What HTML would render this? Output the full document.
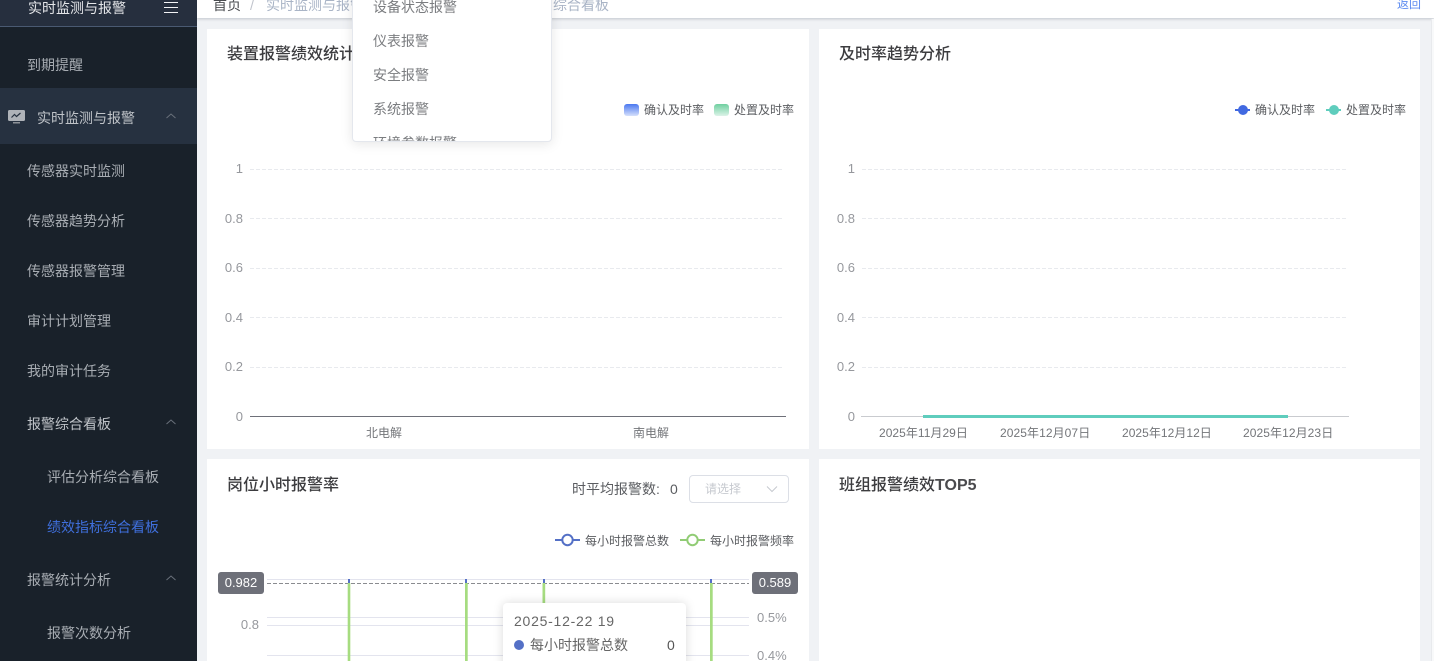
<!DOCTYPE html>
<html lang="zh">
<head>
<meta charset="utf-8">
<style>
*{box-sizing:border-box;margin:0;padding:0}
html,body{width:1434px;height:661px;overflow:hidden;background:#f0f2f5;font-family:"Liberation Sans","Noto Sans CJK SC",sans-serif;color:#606266}
#root{position:absolute;left:0;top:0;width:1434px;height:661px;overflow:hidden;background:#f0f2f5}
.a{position:absolute;white-space:nowrap}
#side{position:absolute;left:0;top:0;width:197px;height:661px;background:#19212a;overflow:hidden}
.m{position:absolute;white-space:nowrap;font-size:14px;line-height:20px;color:#bfc3c8}
.m2{color:#a8adb3}
.card{position:absolute;background:#fff}
.t{position:absolute;font-size:16px;line-height:24px;font-weight:500;color:#3c3c3f;white-space:nowrap}
.y{position:absolute;font-size:13px;line-height:14px;color:#96989d;text-align:right;white-space:nowrap}
.g{position:absolute;height:1px;background:repeating-linear-gradient(90deg,#e8eaee 0 4px,transparent 4px 6px)}
.x{position:absolute;font-size:12px;line-height:14px;color:#737579;white-space:nowrap;text-align:center}
.l{position:absolute;font-size:12px;line-height:14px;color:#5a5c60;white-space:nowrap}
.s{position:absolute;height:1px;background:#e3e4ee}
.cap{position:absolute;width:2px;height:4px;top:579px;background:#5470c6}
.badge{position:absolute;background:#6e7079;color:#fff;font-size:13px;line-height:22px;height:22px;border-radius:3px;text-align:center;top:572px}
.dd{position:absolute;font-size:14px;line-height:20px;color:#7b7d80;white-space:nowrap}
</style>
</head>
<body>
<div id="root">
<!-- topbar -->
<div class="a" style="left:197px;top:0;width:1237px;height:18px;background:#fff;box-shadow:0 1px 3px rgba(0,21,41,.2)"></div>
<div class="a" style="left:213px;top:-5px;font-size:14px;line-height:20px;color:#4a4c50">首页</div>
<div class="a" style="left:250px;top:-5px;font-size:14px;line-height:20px;color:#c0c4cc">/</div>
<div class="a" style="left:266px;top:-5px;font-size:14px;line-height:20px;color:#a9b4c6">实时监测与报警</div>
<div class="a" style="left:553px;top:-5px;font-size:14px;line-height:20px;color:#a9b4c6">综合看板</div>
<div class="a" style="left:1397px;top:-4px;font-size:12px;line-height:16px;color:#5d8bf0">返回</div>
<div class="a" style="left:1431px;top:19px;width:3px;height:642px;background:#f8f9fa;border-left:1px solid #e8eaed"></div>

<!-- card 1 -->
<div class="card" style="left:207px;top:29px;width:602px;height:420px"></div>
<div class="t" style="left:227px;top:43px">装置报警绩效统计</div>
<div class="a" style="left:624px;top:104px;width:15px;height:12px;border-radius:3px;background:linear-gradient(#4a78f0,#d6e0fb)"></div>
<div class="l" style="left:644px;top:103px">确认及时率</div>
<div class="a" style="left:714px;top:104px;width:15px;height:12px;border-radius:3px;background:linear-gradient(#6fd0a0,#dcf3e8)"></div>
<div class="l" style="left:734px;top:103px">处置及时率</div>
<div class="y" style="left:213px;width:30px;top:162px">1</div>
<div class="y" style="left:213px;width:30px;top:212px">0.8</div>
<div class="y" style="left:213px;width:30px;top:261px">0.6</div>
<div class="y" style="left:213px;width:30px;top:311px">0.4</div>
<div class="y" style="left:213px;width:30px;top:360px">0.2</div>
<div class="y" style="left:213px;width:30px;top:410px">0</div>
<div class="g" style="left:250px;width:533px;top:169px"></div>
<div class="g" style="left:250px;width:533px;top:218px"></div>
<div class="g" style="left:250px;width:533px;top:268px"></div>
<div class="g" style="left:250px;width:533px;top:317px"></div>
<div class="g" style="left:250px;width:533px;top:367px"></div>
<div class="a" style="left:250px;top:416px;width:536px;height:1px;background:#6e7079"></div>
<div class="x" style="left:366px;top:426px">北电解</div>
<div class="x" style="left:633px;top:426px">南电解</div>

<!-- card 2 -->
<div class="card" style="left:819px;top:29px;width:601px;height:420px"></div>
<div class="t" style="left:839px;top:43px">及时率趋势分析</div>
<div class="a" style="left:1235px;top:109px;width:15px;height:2px;background:#4169e1"></div>
<div class="a" style="left:1238px;top:105px;width:10px;height:10px;border-radius:50%;background:#4169e1"></div>
<div class="l" style="left:1255px;top:103px">确认及时率</div>
<div class="a" style="left:1326px;top:109px;width:15px;height:2px;background:#5fcdbd"></div>
<div class="a" style="left:1329px;top:105px;width:10px;height:10px;border-radius:50%;background:#5fcdbd"></div>
<div class="l" style="left:1346px;top:103px">处置及时率</div>
<div class="y" style="left:825px;width:30px;top:162px">1</div>
<div class="y" style="left:825px;width:30px;top:212px">0.8</div>
<div class="y" style="left:825px;width:30px;top:261px">0.6</div>
<div class="y" style="left:825px;width:30px;top:311px">0.4</div>
<div class="y" style="left:825px;width:30px;top:360px">0.2</div>
<div class="y" style="left:825px;width:30px;top:410px">0</div>
<div class="g" style="left:862px;width:486px;top:169px"></div>
<div class="g" style="left:862px;width:486px;top:218px"></div>
<div class="g" style="left:862px;width:486px;top:268px"></div>
<div class="g" style="left:862px;width:486px;top:317px"></div>
<div class="g" style="left:862px;width:486px;top:367px"></div>
<div class="a" style="left:861px;top:416px;width:488px;height:1px;background:#c9cbcf"></div>
<div class="a" style="left:923px;top:415px;width:365px;height:3px;background:#5fcdbd"></div>
<div class="x" style="left:879px;top:426px;letter-spacing:.04px">2025年11月29日</div>
<div class="x" style="left:1000px;top:426px;letter-spacing:.08px">2025年12月07日</div>
<div class="x" style="left:1122px;top:426px;letter-spacing:.04px">2025年12月12日</div>
<div class="x" style="left:1243px;top:426px;letter-spacing:.08px">2025年12月23日</div>

<!-- card 3 -->
<div class="card" style="left:207px;top:459px;width:602px;height:202px"></div>
<div class="t" style="left:227px;top:474px">岗位小时报警率</div>
<div class="a" style="left:572px;top:479px;font-size:14px;line-height:20px;color:#5a5c60">时平均报警数:</div>
<div class="a" style="left:670px;top:479px;font-size:14px;line-height:20px;color:#5a5c60">0</div>
<div class="a" style="left:689px;top:475px;width:100px;height:28px;border:1px solid #dcdfe6;border-radius:4px;background:#fff"></div>
<div class="a" style="left:705px;top:481px;font-size:12px;line-height:16px;color:#c6c9cf">请选择</div>
<svg class="a" style="left:765px;top:484px" width="14" height="10" viewBox="0 0 14 10"><path d="M2 2.5L7 7.5L12 2.5" fill="none" stroke="#c6c9cf" stroke-width="1"/></svg>
<svg class="a" style="left:555px;top:533px" width="26" height="14"><path d="M0 7H25" stroke="#5470c6" stroke-width="2"/><circle cx="12.5" cy="7" r="5.2" fill="#fff" stroke="#5470c6" stroke-width="2"/></svg>
<div class="l" style="left:585px;top:534px">每小时报警总数</div>
<svg class="a" style="left:680px;top:533px" width="26" height="14"><path d="M0 7H25" stroke="#91cc75" stroke-width="2"/><circle cx="12.5" cy="7" r="5.2" fill="#fff" stroke="#91cc75" stroke-width="2"/></svg>
<div class="l" style="left:710px;top:534px">每小时报警频率</div>

<div class="s" style="left:267px;width:482px;top:579px"></div>
<div class="s" style="left:267px;width:482px;top:617px"></div>
<div class="s" style="left:267px;width:482px;top:625px"></div>
<div class="s" style="left:267px;width:482px;top:655px"></div>
<svg class="a" style="left:260px;top:575px" width="500" height="86">
  <line x1="7" y1="8.5" x2="489" y2="8.5" stroke="#8a8c90" stroke-width="1" stroke-dasharray="4 2"/>
  <g fill="#a6dc80">
    <rect x="87.7" y="8" width="2.6" height="78"/>
    <rect x="205" y="8" width="2.7" height="78"/>
    <rect x="282.5" y="8" width="2.7" height="78"/>
    <rect x="450" y="8" width="2.7" height="78"/>
  </g>
</svg>
<div class="cap" style="left:348px"></div>
<div class="cap" style="left:465px"></div>
<div class="cap" style="left:543px"></div>
<div class="cap" style="left:710px"></div>
<div class="badge" style="left:218px;width:46px">0.982</div>
<div class="badge" style="left:752px;width:46px">0.589</div>
<div class="y" style="left:229px;width:30px;top:618px">0.8</div>
<div class="y" style="left:757px;top:611px">0.5%</div>
<div class="y" style="left:757px;top:649px">0.4%</div>
<div class="a" style="left:503px;top:603px;width:183px;height:70px;background:#fff;border-radius:4px;box-shadow:0 0 10px rgba(0,0,0,.15)"></div>
<div class="a" style="left:514px;top:612px;font-size:14px;line-height:18px;color:#666;letter-spacing:.75px">2025-12-22 19</div>
<div class="a" style="left:514px;top:640px;width:10px;height:10px;border-radius:50%;background:#5470c6"></div>
<div class="a" style="left:530px;top:636px;font-size:14px;line-height:18px;color:#666">每小时报警总数</div>
<div class="a" style="left:667px;top:636px;font-size:14px;line-height:18px;color:#555">0</div>

<!-- card 4 -->
<div class="card" style="left:819px;top:459px;width:601px;height:202px"></div>
<div class="t" style="left:839px;top:474px">班组报警绩效<span style="font-weight:700;color:#4a4a4d">TOP5</span></div>

<!-- dropdown -->
<div class="a" style="left:352px;top:-10px;width:200px;height:152px;background:#fff;border:1px solid #e4e7ed;border-radius:4px;box-shadow:0 2px 12px rgba(0,0,0,.1);overflow:hidden">
  <div class="dd" style="left:20px;top:6px">设备状态报警</div>
  <div class="dd" style="left:20px;top:40px">仪表报警</div>
  <div class="dd" style="left:20px;top:74px">安全报警</div>
  <div class="dd" style="left:20px;top:108px">系统报警</div>
  <div class="dd" style="left:20px;top:142px">环境参数报警</div>
</div>

<!-- sidebar -->
<div id="side">
  <div class="a" style="left:0;top:0;width:197px;height:27px;background:#262f3e;border-bottom:1px solid #4a5a72"></div>
  <div class="m" style="left:28px;top:-2px;color:#e4e6e9">实时监测与报警</div>
  <div class="a" style="left:164px;top:2px;width:14px;height:1px;background:#f2f3f5"></div>
  <div class="a" style="left:164px;top:7px;width:14px;height:1px;background:#f2f3f5"></div>
  <div class="a" style="left:164px;top:12px;width:14px;height:1px;background:#f2f3f5"></div>
  <div class="m m2" style="left:27px;top:55px">到期提醒</div>
  <div class="a" style="left:0;top:88px;width:197px;height:56px;background:#263140"></div>
  <svg class="a" style="left:8px;top:109px" width="17" height="16" viewBox="0 0 17 16"><rect x="0" y="1" width="17" height="11" rx="1.5" fill="#aeb2b8"/><rect x="5" y="13" width="7" height="1.5" fill="#8d9298"/><path d="M3.5 8.5L6.5 5.5L8.5 7.5L12.5 4" fill="none" stroke="#263140" stroke-width="1.2"/></svg>
  <div class="m" style="left:37px;top:108px">实时监测与报警</div>
  <svg class="a" style="left:165px;top:112px" width="12" height="8"><path d="M1.5 6L6 2L10.5 6" fill="none" stroke="#69707a" stroke-width="1"/></svg>
  <div class="m m2" style="left:27px;top:161px">传感器实时监测</div>
  <div class="m m2" style="left:27px;top:211px">传感器趋势分析</div>
  <div class="m m2" style="left:27px;top:261px">传感器报警管理</div>
  <div class="m m2" style="left:27px;top:311px">审计计划管理</div>
  <div class="m m2" style="left:27px;top:361px">我的审计任务</div>
  <div class="m" style="left:27px;top:414px">报警综合看板</div>
  <svg class="a" style="left:165px;top:418px" width="12" height="8"><path d="M1.5 6L6 2L10.5 6" fill="none" stroke="#69707a" stroke-width="1"/></svg>
  <div class="m m2" style="left:47px;top:467px">评估分析综合看板</div>
  <div class="m" style="left:47px;top:517px;color:#3f6fdc">绩效指标综合看板</div>
  <div class="m m2" style="left:27px;top:570px">报警统计分析</div>
  <svg class="a" style="left:165px;top:574px" width="12" height="8"><path d="M1.5 6L6 2L10.5 6" fill="none" stroke="#69707a" stroke-width="1"/></svg>
  <div class="m m2" style="left:47px;top:623px">报警次数分析</div>
</div>
</div>
</body>
</html>
